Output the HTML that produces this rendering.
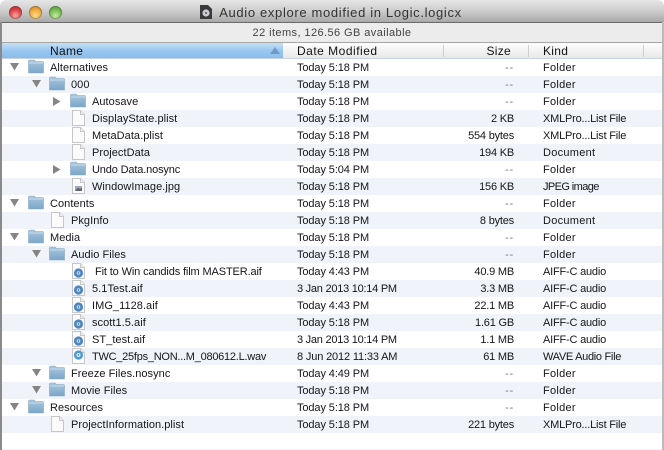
<!DOCTYPE html>
<html><head><meta charset="utf-8"><style>
html,body{margin:0;padding:0;width:664px;height:450px;overflow:hidden;background:#fff}
body{position:relative;font-family:"Liberation Sans",sans-serif;font-size:11px;color:#15151c}
div,span,svg{position:absolute}
#tb{left:0;top:0;width:664px;height:22px;background:linear-gradient(#e6e6e6,#cfcfcf 45%,#a9a9a9);border-radius:6px 6px 0 0}
#tl{left:0;top:22px;width:664px;height:1px;background:#6a6a6a}
#title{left:0;width:664px;top:4px;padding-left:17px;box-sizing:border-box;text-align:center;font-size:13px;letter-spacing:.66px;color:#333;line-height:18px}
.dot{width:13px;height:13px;border-radius:50%;top:6px;box-shadow:inset 0 0 0 1px rgba(70,70,70,.4)}
#st{left:0;top:23px;width:664px;height:19px;background:#ececec;border-bottom:1px solid #a6a6a6;text-align:center;line-height:21px;color:#444;letter-spacing:.42px}
#hd{left:0;top:43px;width:664px;height:15px;background:linear-gradient(#fdfdfd,#f3f3f3 50%,#e8e8e8);border-bottom:1px solid #c8d4e2;font-size:12px;line-height:15px;color:#111;letter-spacing:.3px}
#hd span{top:1px}
#nm{left:2px;top:0;width:281px;height:15px;background:linear-gradient(#c6e0f7,#9bc8f0 50%,#8abcec)}
.sep{top:2px;width:1px;height:12px;background:#cfcfcf}
.r{left:2px;width:660px;height:17px;line-height:17px;letter-spacing:.05px;white-space:nowrap}
.r span{top:1px}
.o{background:#f0f4fa}
.d{left:295px;letter-spacing:-.1px}
.s{left:412px;width:100px;text-align:right;letter-spacing:-.2px}
.k{left:541px;letter-spacing:.28px}
.g{color:#777;letter-spacing:.8px}
.x{letter-spacing:-.2px}
#le{left:0;top:22px;width:2px;height:428px;background:#8a8a8a}
#re{left:662px;top:22px;width:2px;height:428px;background:#bbb}
#bs{left:2px;top:449px;width:660px;height:1px;background:#f0f4fa}
</style></head><body>
<svg width="0" height="0" style="left:0;top:0"><defs>
<linearGradient id="fg" x1="0" y1="0" x2="0" y2="1"><stop offset="0" stop-color="#a9c7de"/><stop offset="1" stop-color="#7ba5c9"/></linearGradient>
<g id="fo"><path d="M.5 2.500Q.5 1 2 1H6L7.500 2.500H14.500Q15.500 2.500 15.500 3.500V14H.5Z" fill="url(#fg)" stroke="#8aa8c0" stroke-width=".6"/><path d="M1 4H15" stroke="#c7dcec" stroke-width="1"/></g>
<g id="fi"><path d="M.5.5H8.500L12.500 4.500V15.500H.5Z" fill="#fbfbfb" stroke="#c6c6c6"/><path d="M8.500.5V4.500H12.500" fill="#efefef" stroke="#c6c6c6"/></g>
<g id="au"><use href="#fi"/><circle cx="6.500" cy="10" r="4.600" fill="#4f86c0"/><circle cx="6.500" cy="10" r="1.800" fill="#cfe2f3"/><circle cx="6.500" cy="10" r=".7" fill="#2a5a90"/></g>
<g id="wa"><use href="#fi"/><circle cx="6.500" cy="7" r="4.600" fill="#4b9ad8"/><circle cx="6.500" cy="7" r="2" fill="#e8f3fb"/><circle cx="6.500" cy="7" r=".8" fill="#2a6aa0"/></g>
<g id="jp"><use href="#fi"/><rect x="3" y="8" width="7" height="5" fill="#a4aab8"/><path d="M3 13L6 9.500L8 11L10 9.500V13Z" fill="#5d6577"/></g>
<path id="dn" d="M0 0H9L4.500 7.500Z" fill="#858585"/>
<path id="rt" d="M0 0V9L7.500 4.500Z" fill="#858585"/>
</defs></svg>

<div id="tb"></div><div id="tl"></div>
<div class="dot" style="left:9px;background:radial-gradient(circle at 50% 75%,#f8a6a6,#dc3d42 55%,#aa2429)"></div>
<div class="dot" style="left:29px;background:radial-gradient(circle at 50% 75%,#fbdc90,#eda636 55%,#bd7a1c)"></div>
<div class="dot" style="left:49px;background:radial-gradient(circle at 50% 75%,#c6eda0,#73b84e 55%,#4f8f33)"></div>
<svg style="left:200px;top:5px" width="12" height="14"><path d="M0 0H8L12 4V14H0Z" fill="#3a3a3a"/><circle cx="6" cy="8" r="3.600" fill="#c9ccd2"/><circle cx="6" cy="8" r="1" fill="#555"/></svg>
<div id="title">Audio explore modified in Logic.logicx</div>
<div id="st">22 items, 126.56 GB available</div>
<div id="hd"><div id="nm"></div>
<span style="left:50px">Name</span>
<svg style="left:270px;top:4px" width="10" height="7"><path d="M5 0L10 7H0Z" fill="#6e9bcb"/></svg>
<span style="left:297px;letter-spacing:.5px">Date Modified</span>
<div class="sep" style="left:443px"></div>
<span style="left:411px;width:100px;text-align:right">Size</span>
<div class="sep" style="left:528px"></div>
<span style="left:543px">Kind</span>
<div class="sep" style="left:643px"></div>
</div>
<div id="le"></div><div id="re"></div><div id="bs"></div>

<div class="r" style="top:59px"><svg style="left:8px;top:4px" width="9" height="8"><use href="#dn"/></svg><svg style="left:26px;top:0" width="17" height="16"><use href="#fo"/></svg><span style="left:48px">Alternatives</span><span class="d">Today 5:18 PM</span><span class="s g">--</span><span class="k">Folder</span></div>
<div class="r o" style="top:76px"><svg style="left:30px;top:4px" width="9" height="8"><use href="#dn"/></svg><svg style="left:47px;top:0" width="17" height="16"><use href="#fo"/></svg><span style="left:69px">000</span><span class="d">Today 5:18 PM</span><span class="s g">--</span><span class="k">Folder</span></div>
<div class="r" style="top:93px"><svg style="left:51px;top:4px" width="8" height="9"><use href="#rt"/></svg><svg style="left:68px;top:0" width="17" height="16"><use href="#fo"/></svg><span style="left:90px">Autosave</span><span class="d">Today 5:18 PM</span><span class="s g">--</span><span class="k">Folder</span></div>
<div class="r o" style="top:110px"><svg style="left:70px;top:0" width="13" height="17"><use href="#fi"/></svg><span style="left:90px">DisplayState.plist</span><span class="d">Today 5:18 PM</span><span class="s">2 KB</span><span class="k x">XMLPro...List File</span></div>
<div class="r" style="top:127px"><svg style="left:70px;top:0" width="13" height="17"><use href="#fi"/></svg><span style="left:90px">MetaData.plist</span><span class="d">Today 5:18 PM</span><span class="s">554 bytes</span><span class="k x">XMLPro...List File</span></div>
<div class="r o" style="top:144px"><svg style="left:70px;top:0" width="13" height="17"><use href="#fi"/></svg><span style="left:90px">ProjectData</span><span class="d">Today 5:18 PM</span><span class="s">194 KB</span><span class="k">Document</span></div>
<div class="r" style="top:161px"><svg style="left:51px;top:4px" width="8" height="9"><use href="#rt"/></svg><svg style="left:68px;top:0" width="17" height="16"><use href="#fo"/></svg><span style="left:90px;letter-spacing:-.15px">Undo Data.nosync</span><span class="d">Today 5:04 PM</span><span class="s g">--</span><span class="k">Folder</span></div>
<div class="r o" style="top:178px"><svg style="left:70px;top:0" width="13" height="17"><use href="#jp"/></svg><span style="left:90px">WindowImage.jpg</span><span class="d">Today 5:18 PM</span><span class="s">156 KB</span><span class="k" style="letter-spacing:-.6px">JPEG image</span></div>
<div class="r" style="top:195px"><svg style="left:8px;top:4px" width="9" height="8"><use href="#dn"/></svg><svg style="left:26px;top:0" width="17" height="16"><use href="#fo"/></svg><span style="left:48px">Contents</span><span class="d">Today 5:18 PM</span><span class="s g">--</span><span class="k">Folder</span></div>
<div class="r o" style="top:212px"><svg style="left:49px;top:0" width="13" height="17"><use href="#fi"/></svg><span style="left:69px">PkgInfo</span><span class="d">Today 5:18 PM</span><span class="s">8 bytes</span><span class="k">Document</span></div>
<div class="r" style="top:229px"><svg style="left:8px;top:4px" width="9" height="8"><use href="#dn"/></svg><svg style="left:26px;top:0" width="17" height="16"><use href="#fo"/></svg><span style="left:48px">Media</span><span class="d">Today 5:18 PM</span><span class="s g">--</span><span class="k">Folder</span></div>
<div class="r o" style="top:246px"><svg style="left:30px;top:4px" width="9" height="8"><use href="#dn"/></svg><svg style="left:47px;top:0" width="17" height="16"><use href="#fo"/></svg><span style="left:69px">Audio Files</span><span class="d">Today 5:18 PM</span><span class="s g">--</span><span class="k">Folder</span></div>
<div class="r" style="top:263px"><svg style="left:70px;top:0" width="13" height="17"><use href="#au"/></svg><span style="left:93px;letter-spacing:-.13px">Fit to Win candids film MASTER.aif</span><span class="d">Today 4:43 PM</span><span class="s">40.9 MB</span><span class="k x">AIFF-C audio</span></div>
<div class="r o" style="top:280px"><svg style="left:70px;top:0" width="13" height="17"><use href="#au"/></svg><span style="left:90px">5.1Test.aif</span><span class="d" style="letter-spacing:-.25px">3 Jan 2013 10:14 PM</span><span class="s">3.3 MB</span><span class="k x">AIFF-C audio</span></div>
<div class="r" style="top:297px"><svg style="left:70px;top:0" width="13" height="17"><use href="#au"/></svg><span style="left:90px">IMG_1128.aif</span><span class="d">Today 4:43 PM</span><span class="s">22.1 MB</span><span class="k x">AIFF-C audio</span></div>
<div class="r o" style="top:314px"><svg style="left:70px;top:0" width="13" height="17"><use href="#au"/></svg><span style="left:90px">scott1.5.aif</span><span class="d">Today 5:18 PM</span><span class="s">1.61 GB</span><span class="k x">AIFF-C audio</span></div>
<div class="r" style="top:331px"><svg style="left:70px;top:0" width="13" height="17"><use href="#au"/></svg><span style="left:90px">ST_test.aif</span><span class="d" style="letter-spacing:-.25px">3 Jan 2013 10:14 PM</span><span class="s">1.1 MB</span><span class="k x">AIFF-C audio</span></div>
<div class="r o" style="top:348px"><svg style="left:70px;top:0" width="13" height="17"><use href="#wa"/></svg><span style="left:90px;letter-spacing:-.25px">TWC_25fps_NON...M_080612.L.wav</span><span class="d" style="letter-spacing:-.15px">8 Jun 2012 11:33 AM</span><span class="s">61 MB</span><span class="k" style="letter-spacing:-.3px">WAVE Audio File</span></div>
<div class="r" style="top:365px"><svg style="left:30px;top:4px" width="9" height="8"><use href="#dn"/></svg><svg style="left:47px;top:0" width="17" height="16"><use href="#fo"/></svg><span style="left:69px">Freeze Files.nosync</span><span class="d">Today 4:49 PM</span><span class="s g">--</span><span class="k">Folder</span></div>
<div class="r o" style="top:382px"><svg style="left:30px;top:4px" width="9" height="8"><use href="#dn"/></svg><svg style="left:47px;top:0" width="17" height="16"><use href="#fo"/></svg><span style="left:69px">Movie Files</span><span class="d">Today 5:18 PM</span><span class="s g">--</span><span class="k">Folder</span></div>
<div class="r" style="top:399px"><svg style="left:8px;top:4px" width="9" height="8"><use href="#dn"/></svg><svg style="left:26px;top:0" width="17" height="16"><use href="#fo"/></svg><span style="left:48px">Resources</span><span class="d">Today 5:18 PM</span><span class="s g">--</span><span class="k">Folder</span></div>
<div class="r o" style="top:416px"><svg style="left:49px;top:0" width="13" height="17"><use href="#fi"/></svg><span style="left:69px">ProjectInformation.plist</span><span class="d">Today 5:18 PM</span><span class="s">221 bytes</span><span class="k x">XMLPro...List File</span></div>
</body></html>
